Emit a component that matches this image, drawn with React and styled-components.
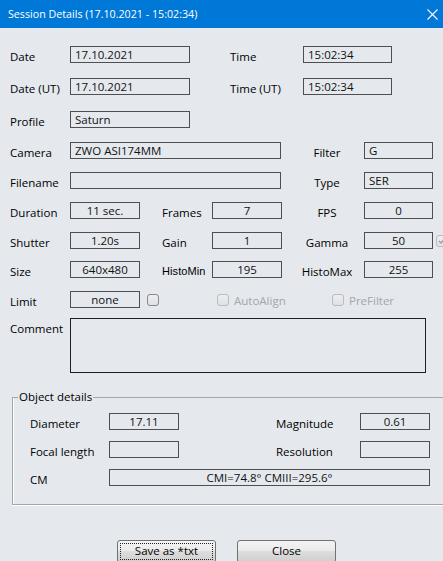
import styled, { createGlobalStyle } from "styled-components";

const GlobalStyle = createGlobalStyle`
	html, body {
		margin: 0;
		padding: 0;
		background: #e5e9ee;
	}
	body {
		font-family: "Open Sans", "Noto Sans", sans-serif;
		font-size: 11.5px;
		color: #000;
	}
`;

const Window = styled.div`
	width: 443px;
	height: 561px;
	overflow: hidden;
	background: #e5e9ee;
	display: flex;
	flex-direction: column;
`;

const TitleBar = styled.div`
	height: 28px;
	flex: 0 0 28px;
	background: #0078d7;
	color: #fff;
	display: flex;
	align-items: center;
	justify-content: space-between;
	padding: 0 5px 0 8px;
	font-size: 10.7px;
`;

const Body = styled.div`
	padding: 18px 0 0 10px;
	display: flex;
	flex-direction: column;
`;

const Row = styled.div`
	display: flex;
	align-items: center;
	height: 17px;
	margin-top: ${(p) => p.$top || 0}px;
	flex: 0 0 auto;
`;

const Label = styled.div`
	width: ${(p) => p.$w}px;
	margin-left: ${(p) => p.$ml || 0}px;
	padding-top: 3px;
	text-align: ${(p) => (p.$center ? "center" : "left")};
	white-space: nowrap;
	flex: 0 0 auto;
	${(p) =>
		p.$small &&
		`font-family: "Liberation Sans", Arial, sans-serif; font-size: 11px; letter-spacing: 0.1px;`}
`;

const Field = styled.div`
	box-sizing: border-box;
	width: ${(p) => p.$w}px;
	height: 17px;
	flex: 0 0 auto;
	border: 1px solid #4d4f52;
	padding: 0 4px;
	line-height: 15px;
	text-align: ${(p) => (p.$center ? "center" : "left")};
	white-space: nowrap;
	overflow: hidden;
	color: #111;
`;

const Check = styled.span`
	box-sizing: border-box;
	display: inline-flex;
	align-items: center;
	justify-content: center;
	width: 12px;
	height: 12px;
	flex: 0 0 12px;
	margin-left: ${(p) => p.$ml || 0}px;
	border-radius: 3px;
	border: 1px solid ${(p) => (p.$disabled ? "#b9bcc0" : "#86898d")};
	background: linear-gradient(#eceef0, #dfe1e4);
`;

const CheckOption = styled.div`
	display: flex;
	align-items: center;
	width: ${(p) => p.$w}px;
	margin-left: ${(p) => p.$ml || 0}px;
	color: #a3a6aa;
	flex: 0 0 auto;

	span + span {
		margin-left: 5px;
	}
`;

const OptionText = styled.span`
	padding-top: 1px;
`;

const CommentRow = styled.div`
	display: flex;
	align-items: flex-start;
	margin-top: 10px;
`;

const CommentLabel = styled.div`
	width: 60px;
	padding-top: 3px;
`;

const CommentBox = styled.div`
	box-sizing: border-box;
	width: 356px;
	height: 55px;
	border: 1px solid #1e1f21;
`;

const Group = styled.fieldset`
	margin: 16px 0 0 2px;
	padding: 0 0 18px 17px;
	border: 1px solid #a3a6aa;
	border-right: none;
	box-shadow: inset 1px 0 0 #fff, 0 1px 0 #fff;
	min-width: 0;
`;

const Legend = styled.legend`
	margin-left: -12px;
	padding: 0 1px;
	line-height: 16px;
`;

const GroupRow = styled(Row)`
	margin-top: ${(p) => p.$top}px;
`;

const ButtonBar = styled.div`
	display: flex;
	gap: 21px;
	margin-top: 35px;
	padding-left: 107px;
`;

const Button = styled.button`
	box-sizing: border-box;
	width: 99px;
	height: 23px;
	flex: 0 0 auto;
	border: 1px solid #707275;
	border-radius: 3px;
	background: linear-gradient(#f3f3f3, #ebebeb 45%, #dddddd 50%, #cfcfcf);
	font-family: inherit;
	font-size: 11.5px;
	color: #000;
	padding: 0 0 2px;
	${(p) => p.$focused && `outline: 1px dotted #222; outline-offset: -4px;`}
`;

const CloseIcon = () => (
	<svg width="11" height="11" viewBox="0 0 11 11">
		<path d="M0.5 0.5 L10.5 10.5 M10.5 0.5 L0.5 10.5" stroke="#fff" strokeWidth="1.1" />
	</svg>
);

const GrayTick = () => (
	<svg width="8" height="8" viewBox="0 0 8 8">
		<path d="M1 4 L3 6 L7 1.5" fill="none" stroke="#9a9da1" strokeWidth="1.4" />
	</svg>
);

const App = () => {
	return (
		<Window>
			<GlobalStyle />
			<TitleBar>
				<span>Session Details (17.10.2021 - 15:02:34)</span>
				<CloseIcon />
			</TitleBar>
			<Body>
				<Row>
					<Label $w={60}>Date</Label>
					<Field $w={120}>17.10.2021</Field>
					<Label $w={73} $ml={40}>Time</Label>
					<Field $w={89}>15:02:34</Field>
				</Row>
				<Row $top={15}>
					<Label $w={60}>Date (UT)</Label>
					<Field $w={120}>17.10.2021</Field>
					<Label $w={73} $ml={40}>Time (UT)</Label>
					<Field $w={89}>15:02:34</Field>
				</Row>
				<Row $top={16}>
					<Label $w={60}>Profile</Label>
					<Field $w={120}>Saturn</Field>
				</Row>
				<Row $top={14}>
					<Label $w={60}>Camera</Label>
					<Field $w={211}>ZWO ASI174MM</Field>
					<Label $w={74} $ml={9} $center>Filter</Label>
					<Field $w={69}>G</Field>
				</Row>
				<Row $top={13}>
					<Label $w={60}>Filename</Label>
					<Field $w={211}></Field>
					<Label $w={74} $ml={9} $center>Type</Label>
					<Field $w={69}>SER</Field>
				</Row>
				<Row $top={13}>
					<Label $w={60}>Duration</Label>
					<Field $w={70} $center>11 sec.</Field>
					<Label $w={50} $ml={22}>Frames</Label>
					<Field $w={70} $center>7</Field>
					<Label $w={74} $ml={8} $center>FPS</Label>
					<Field $w={69} $center>0</Field>
				</Row>
				<Row $top={13}>
					<Label $w={60}>Shutter</Label>
					<Field $w={70} $center>1.20s</Field>
					<Label $w={50} $ml={22}>Gain</Label>
					<Field $w={70} $center>1</Field>
					<Label $w={74} $ml={8} $center>Gamma</Label>
					<Field $w={69} $center>50</Field>
					<Check $ml={3} $disabled>
						<GrayTick />
					</Check>
				</Row>
				<Row $top={12}>
					<Label $w={60}>Size</Label>
					<Field $w={70} $center>640x480</Field>
					<Label $w={50} $ml={22} $small>HistoMin</Label>
					<Field $w={70} $center>195</Field>
					<Label $w={74} $ml={8} $center>HistoMax</Label>
					<Field $w={69} $center>255</Field>
				</Row>
				<Row $top={13}>
					<Label $w={60}>Limit</Label>
					<Field $w={70} $center>none</Field>
					<Check $ml={7} />
					<CheckOption $w={115} $ml={58}>
						<Check $disabled />
						<OptionText>AutoAlign</OptionText>
					</CheckOption>
					<CheckOption $w={100}>
						<Check $disabled />
						<OptionText>PreFilter</OptionText>
					</CheckOption>
				</Row>
				<CommentRow>
					<CommentLabel>Comment</CommentLabel>
					<CommentBox />
				</CommentRow>
				<Group>
					<Legend>Object details</Legend>
					<GroupRow $top={8}>
						<Label $w={79}>Diameter</Label>
						<Field $w={70} $center>17.11</Field>
						<Label $w={84} $ml={97}>Magnitude</Label>
						<Field $w={70} $center>0.61</Field>
					</GroupRow>
					<GroupRow $top={11}>
						<Label $w={79}>Focal length</Label>
						<Field $w={70}></Field>
						<Label $w={84} $ml={97}>Resolution</Label>
						<Field $w={70}></Field>
					</GroupRow>
					<GroupRow $top={11}>
						<Label $w={79}>CM</Label>
						<Field $w={321} $center>CMI=74.8° CMIII=295.6°</Field>
					</GroupRow>
				</Group>
				<ButtonBar>
					<Button $focused>Save as *txt</Button>
					<Button>Close</Button>
				</ButtonBar>
			</Body>
		</Window>
	);
};

export default App;
